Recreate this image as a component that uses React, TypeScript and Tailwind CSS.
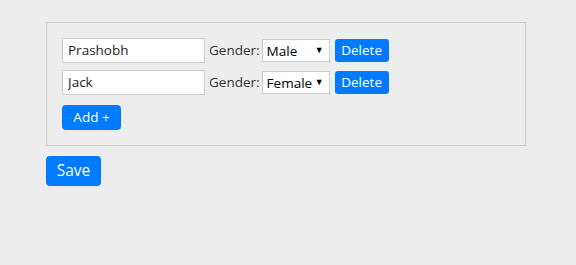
import { useState } from "react";

type Person = { name: string; gender: string };

const App = () => {
  const [people, setPeople] = useState<Person[]>([
    { name: "Prashobh", gender: "Male" },
    { name: "Jack", gender: "Female" },
  ]);

  const update = (i: number, key: keyof Person, value: string) => {
    setPeople(people.map((p, idx) => (idx === i ? { ...p, [key]: value } : p)));
  };

  return (
    <div
      className="min-h-[265px] bg-[#ededed] pt-[22px] pl-[46px] text-[#212529]"
      style={{ fontFamily: '"Open Sans", "Noto Sans", sans-serif' }}
    >
      <div className="w-[480px] border border-[#cccccc] pt-[15px] pb-[15px] pl-[15px]">
        <div className="flex flex-col gap-2">
          {people.map((p, i) => (
            <div key={i} className="flex items-center h-6">
              <input
                value={p.name}
                onChange={(e) => update(i, "name", e.target.value)}
                className="w-[143px] h-[25px] border border-[#cccccc] bg-white px-[5px] text-[13.5px] text-[#212529] outline-none"
              />
              <span className="ml-[4px] text-[13.5px] text-[#333]">Gender:</span>
              <div className="relative ml-[2px]">
                <select
                  value={p.gender}
                  onChange={(e) => update(i, "gender", e.target.value)}
                  className="appearance-none w-[68px] h-[23px] border border-[#cccccc] bg-white pl-[4px] text-[13.5px] text-black outline-none"
                >
                  <option>Male</option>
                  <option>Female</option>
                </select>
                <span className="pointer-events-none absolute right-[6px] top-[5px] text-[9px] text-black">▼</span>
              </div>
              <button className="ml-[5px] h-[23px] w-[54px] rounded-[3px] bg-[#007bff] text-[13.5px] text-white">
                Delete
              </button>
            </div>
          ))}
        </div>
        <button className="mt-[11px] h-[25px] w-[59px] rounded-[4px] bg-[#007bff] text-[13.5px] text-white">
          Add +
        </button>
      </div>
      <button className="mt-[10px] h-[30px] w-[55px] rounded-[4px] bg-[#007bff] text-[15.5px] text-white">
        Save
      </button>
    </div>
  );
};

export default App;
